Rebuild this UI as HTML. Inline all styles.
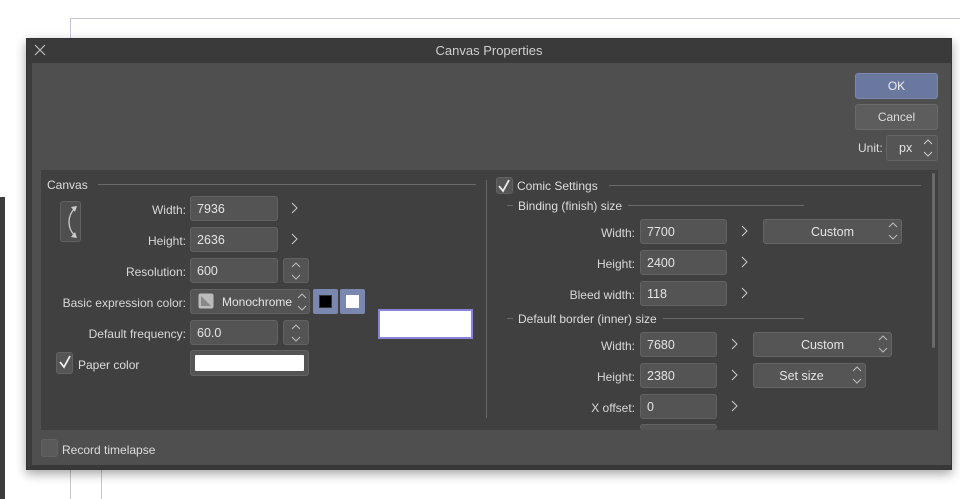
<!DOCTYPE html>
<html><head><meta charset="utf-8"><style>
*{margin:0;padding:0;box-sizing:border-box}
body{width:960px;height:499px;background:#fff;position:relative;overflow:hidden;font-family:"Liberation Sans",sans-serif;font-size:12px;color:#ddd}
.a{position:absolute}
.f{position:absolute;background:#545454;border:1px solid #626262;border-radius:3px;height:25px;line-height:24px;padding-left:6px;color:#e4e4e4;font-size:12.5px}
.l{position:absolute;text-align:right;color:#d8d8d8;width:160px}
.sp{position:absolute;background:#545454;border:1px solid #626262;border-radius:3px}
.hl{position:absolute;height:1px;background:#6a6a6a}
.dd{position:absolute;background:#555;border:1px solid #656565;border-radius:3px;height:25px;line-height:24px;text-align:center;color:#e4e4e4;font-size:12.5px}
</style></head><body>
<div class="a" style="left:70px;top:18px;width:890px;height:1px;background:#c8c4dc"></div>
<div class="a" style="left:70px;top:18px;width:1px;height:30px;background:#c8c4dc"></div>
<div class="a" style="left:0;top:197px;width:5px;height:302px;background:#3c3c3c"></div>
<div class="a" style="left:70px;top:470px;width:1px;height:29px;background:#c8c8c8"></div>
<div class="a" style="left:101px;top:470px;width:1px;height:29px;background:#c8c8c8"></div>

<div class="a" style="left:26px;top:38px;width:926px;height:432px;background:#4f4f4f;border:1px solid #333;box-shadow:0 4px 10px rgba(0,0,0,.35)">
<div class="a" style="left:0;top:0;width:924px;height:24px;background:#3a3a3a"></div>
<div class="a" style="left:0;top:426px;width:924px;height:5px;background:#383838"></div>
<div class="a" style="left:0;top:24px;width:5px;height:404px;background:#3c3c3c"></div>
</div>
<svg class="a" style="left:34px;top:44px" width="12" height="12"><path d="M1 1L11 11M11 1L1 11" stroke="#bbb" stroke-width="1.2"/></svg>
<div class="a" style="left:0;top:43px;width:978px;text-align:center;font-size:13px;color:#cfcfcf">Canvas Properties</div>

<div class="a" style="left:855px;top:73px;width:83px;height:26px;background:#6a78a0;border:1px solid #7a88b0;border-radius:3px;text-align:center;line-height:24px;font-size:12px;color:#eee">OK</div>
<div class="a" style="left:855px;top:104px;width:83px;height:26px;background:#5d5d5d;border:1px solid #6a6a6a;border-radius:3px;text-align:center;line-height:24px;font-size:12px;color:#ddd">Cancel</div>
<div class="a" style="left:858px;top:141px;font-size:12px">Unit:</div>
<div class="dd" style="left:886px;top:135px;width:52px;height:26px;text-align:left;padding-left:12px">px</div>
<svg class="a" style="left:922px;top:138px" width="12" height="20"><path d="M2 6L6 2L10 6M2 14L6 18L10 14" stroke="#ccc" fill="none"/></svg>

<div class="a" style="left:41px;top:170px;width:897px;height:260px;background:#404040"></div>
<div class="a" style="left:932px;top:173px;width:3px;height:175px;background:#6a6a6a;border-radius:2px"></div>
<div class="a" style="left:486px;top:180px;width:1px;height:238px;background:#666"></div>

<div class="a" style="left:47px;top:178px">Canvas</div>
<div class="hl" style="left:98px;top:184px;width:378px"></div>
<div class="sp" style="left:60px;top:201px;width:21px;height:41px;background:#4e4e4e"></div>
<svg class="a" style="left:63px;top:204px" width="16" height="36"><path d="M12 4C4 12 4 24 12 32" stroke="#ccc" fill="none" stroke-width="1.3"/><path d="M8 3L14 2L12 8Z M8 33L14 34L12 28Z" fill="#ccc"/></svg>

<div class="l" style="left:26px;top:203px">Width:</div>
<div class="f" style="left:190px;top:196px;width:88px">7936</div>
<div class="l" style="left:26px;top:234px">Height:</div>
<div class="f" style="left:190px;top:227px;width:88px">2636</div>
<div class="l" style="left:26px;top:265px">Resolution:</div>
<div class="f" style="left:190px;top:258px;width:88px">600</div>
<div class="l" style="left:26px;top:296px">Basic expression color:</div>
<div class="f" style="left:190px;top:289px;width:120px;padding-left:31px;font-size:12px">Monochrome</div>
<svg class="a" style="left:198px;top:293px" width="16" height="16"><rect x="0.5" y="0.5" width="15" height="15" fill="#bbb" rx="2"/><path d="M3 3L13 13L3 13Z" fill="#888"/></svg>
<div class="l" style="left:26px;top:327px">Default frequency:</div>
<div class="f" style="left:190px;top:320px;width:88px">60.0</div>
<div class="sp" style="left:56px;top:352px;width:17px;height:22px;background:#555"></div>
<svg class="a" style="left:58px;top:354px" width="14" height="16"><path d="M2 8L6 13L12 2" stroke="#eee" fill="none" stroke-width="1.8"/></svg>
<div class="a" style="left:78px;top:358px;color:#ddd">Paper color</div>
<div class="f" style="left:190px;top:350px;width:119px;height:26px;padding:4px"><div style="background:#fff;height:16px;border-radius:1px"></div></div>

<div class="sp" style="left:283px;top:258px;width:26px;height:25px"></div>
<div class="sp" style="left:283px;top:320px;width:26px;height:25px"></div>
<svg class="a" style="left:290px;top:261px" width="12" height="20"><path d="M2 6L6 2L10 6M2 14L6 18L10 14" stroke="#bbb" fill="none"/></svg>
<svg class="a" style="left:290px;top:323px" width="12" height="20"><path d="M2 6L6 2L10 6M2 14L6 18L10 14" stroke="#bbb" fill="none"/></svg>
<svg class="a" style="left:296px;top:292px" width="12" height="20"><path d="M2 6L6 2L10 6M2 14L6 18L10 14" stroke="#bbb" fill="none"/></svg>
<div class="a" style="left:313px;top:289px;width:25px;height:25px;background:#7a88b0;border-radius:2px"><div style="margin:6px;width:13px;height:13px;background:#000;border:1px solid #333"></div></div>
<div class="a" style="left:340px;top:289px;width:25px;height:25px;background:#7a88b0;border-radius:2px"><div style="margin:6px;width:13px;height:13px;background:#fff"></div></div>
<div class="a" style="left:378px;top:309px;width:95px;height:30px;background:#fff;border:2px solid #8a84d8"></div>

<svg class="a" style="left:290px;top:202px" width="10" height="12"><path d="M2 1L7 6L2 11" stroke="#ccc" fill="none"/></svg>
<svg class="a" style="left:290px;top:233px" width="10" height="12"><path d="M2 1L7 6L2 11" stroke="#ccc" fill="none"/></svg>

<div class="sp" style="left:496px;top:177px;width:17px;height:17px;background:#555"></div>
<svg class="a" style="left:497px;top:178px" width="14" height="16"><path d="M2 8L6 13L12 2" stroke="#eee" fill="none" stroke-width="1.8"/></svg>
<div class="a" style="left:517px;top:179px">Comic Settings</div>
<div class="hl" style="left:609px;top:185px;width:312px"></div>
<div class="hl" style="left:507px;top:205px;width:6px"></div>
<div class="a" style="left:518px;top:199px">Binding (finish) size</div>
<div class="hl" style="left:628px;top:205px;width:176px"></div>

<div class="l" style="left:475px;top:226px">Width:</div>
<div class="f" style="left:640px;top:219px;width:87px">7700</div>
<div class="l" style="left:475px;top:257px">Height:</div>
<div class="f" style="left:640px;top:250px;width:87px">2400</div>
<div class="l" style="left:475px;top:288px">Bleed width:</div>
<div class="f" style="left:640px;top:281px;width:87px">118</div>
<svg class="a" style="left:740px;top:225px" width="10" height="12"><path d="M2 1L7 6L2 11" stroke="#ccc" fill="none"/></svg>
<svg class="a" style="left:740px;top:256px" width="10" height="12"><path d="M2 1L7 6L2 11" stroke="#ccc" fill="none"/></svg>
<svg class="a" style="left:740px;top:287px" width="10" height="12"><path d="M2 1L7 6L2 11" stroke="#ccc" fill="none"/></svg>
<div class="dd" style="left:763px;top:219px;width:139px">Custom</div>
<svg class="a" style="left:887px;top:221px" width="12" height="20"><path d="M2 6L6 2L10 6M2 14L6 18L10 14" stroke="#bbb" fill="none"/></svg>

<div class="hl" style="left:507px;top:318px;width:6px"></div>
<div class="a" style="left:518px;top:312px">Default border (inner) size</div>
<div class="hl" style="left:663px;top:318px;width:141px"></div>
<div class="l" style="left:475px;top:339px">Width:</div>
<div class="f" style="left:640px;top:332px;width:77px">7680</div>
<div class="l" style="left:475px;top:370px">Height:</div>
<div class="f" style="left:640px;top:363px;width:77px">2380</div>
<div class="l" style="left:475px;top:401px">X offset:</div>
<div class="f" style="left:640px;top:394px;width:77px">0</div>
<div class="f" style="left:640px;top:424px;width:77px;height:6px;border-bottom:none"></div>
<svg class="a" style="left:730px;top:338px" width="10" height="12"><path d="M2 1L7 6L2 11" stroke="#ccc" fill="none"/></svg>
<svg class="a" style="left:730px;top:369px" width="10" height="12"><path d="M2 1L7 6L2 11" stroke="#ccc" fill="none"/></svg>
<svg class="a" style="left:730px;top:400px" width="10" height="12"><path d="M2 1L7 6L2 11" stroke="#ccc" fill="none"/></svg>
<div class="dd" style="left:753px;top:332px;width:139px">Custom</div>
<svg class="a" style="left:877px;top:334px" width="12" height="20"><path d="M2 6L6 2L10 6M2 14L6 18L10 14" stroke="#bbb" fill="none"/></svg>
<div class="dd" style="left:753px;top:363px;width:113px;padding-right:16px">Set size</div>
<svg class="a" style="left:851px;top:365px" width="12" height="20"><path d="M2 6L6 2L10 6M2 14L6 18L10 14" stroke="#bbb" fill="none"/></svg>

<div class="sp" style="left:41px;top:439px;width:17px;height:18px;background:#5a5a5a"></div>
<div class="a" style="left:62px;top:443px;color:#ddd">Record timelapse</div>
</body></html>
